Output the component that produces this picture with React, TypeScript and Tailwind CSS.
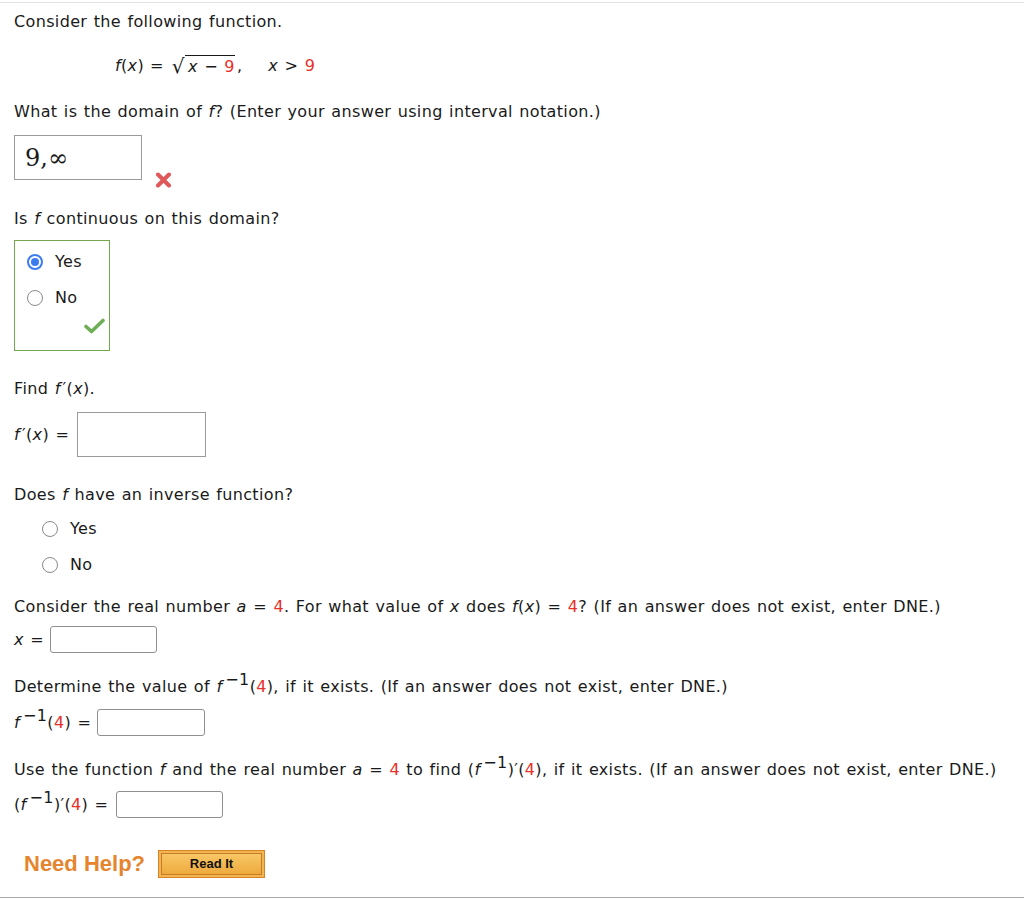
import React from 'react'

const red = 'text-[#e8302a]'

function I({ children }: { children: React.ReactNode }) {
  return <span className="italic">{children}</span>
}

function R({ children }: { children: React.ReactNode }) {
  return <span className={red}>{children}</span>
}

function Inv() {
  return (
    <>
      <I>f</I>
      <span className="relative -top-[7px] ml-[3px] text-[16px] leading-none">−1</span>
    </>
  )
}

function Radio({ checked, label }: { checked?: boolean; label: string }) {
  return (
    <div className="flex h-5 items-center">
      {checked ? (
        <span className="flex h-4 w-4 items-center justify-center rounded-full border-[2px] border-[#3b7cf0] bg-white">
          <span className="h-[8px] w-[8px] rounded-full bg-[#3b7cf0]" />
        </span>
      ) : (
        <span className="h-4 w-4 rounded-full border border-[#8a8a8a] bg-white" />
      )}
      <span className="ml-3">{label}</span>
    </div>
  )
}

function SmallBox({ width }: { width: string }) {
  return <div className={`h-[27px] rounded-[3px] border border-[#8f8f8f] bg-white ${width}`} />
}

export default function App() {
  return (
    <div className="flex h-[899px] w-[1024px] flex-col bg-white text-[16px] leading-5 tracking-[0.35px] text-[#1a1a1a] [font-family:'DejaVu_Sans',Verdana,sans-serif] [word-spacing:1px]">
      <div className="mt-[2px] h-px bg-[#e3e3e3]" />
      <div className="pl-[14px]">
        <p className="mt-[9px]">Consider the following function.</p>

        <div className="ml-[101px] mt-[23px] flex items-center">
          <I>f</I>(<I>x</I>) <span className="ml-[6px]">=</span>
          <span className="ml-[8px] text-[20px] leading-5">√</span>
          <span className="border-t border-[#1a1a1a] pl-[3px] pt-[1px]">
            <I>x</I> − <R>9</R>
          </span>
          <span className="ml-[2px]">,</span>
          <span className="ml-[26px]">
            <I>x</I> &gt; <R>9</R>
          </span>
        </div>

        <p className="mt-[25px]">
          What is the domain of <I>f</I>? (Enter your answer using interval notation.)
        </p>

        <div className="mt-[13px] flex items-start">
          <div className="flex h-[45px] w-[128px] items-center border border-[#9a9a9a] pl-[10px] text-[24px] tracking-normal [font-family:'DejaVu_Serif','Liberation_Serif',serif]">
            9,∞
          </div>
          <svg className="ml-[13px] mt-[37px]" width="17" height="16" viewBox="0 0 17 16">
            <path d="M3 2.5 L14 13.5 M14 2.5 L3 13.5" stroke="#e0585a" strokeWidth="4" strokeLinecap="round" />
          </svg>
        </div>

        <p className="mt-[21px]">
          Is <I>f</I> continuous on this domain?
        </p>

        <div className="mt-[11px] flex h-[111px] w-[96px] flex-col border-[1.5px] border-[#74a84c] pl-[12px]">
          <div className="mt-[11px]">
            <Radio checked label="Yes" />
          </div>
          <div className="mt-[16px]">
            <Radio label="No" />
          </div>
          <svg className="ml-[57px] mt-[10px]" width="21" height="16" viewBox="0 0 21 16">
            <path d="M2 8.5 L7.5 13.5 L19 2.5" fill="none" stroke="#6fae55" strokeWidth="3.6" strokeLinecap="round" strokeLinejoin="round" />
          </svg>
        </div>

        <p className="mt-[28px]">
          Find <I>f</I>
          <span className="ml-[2px]">′</span>(<I>x</I>).
        </p>

        <div className="mt-[13px] flex items-center">
          <span>
            <I>f</I>
            <span className="ml-[2px]">′</span>(<I>x</I>) =
          </span>
          <div className="ml-[8px] h-[45px] w-[129px] border border-[#9a9a9a] bg-white" />
        </div>

        <p className="mt-[28px]">
          Does <I>f</I> have an inverse function?
        </p>

        <div className="ml-[28px] mt-[14px]">
          <Radio label="Yes" />
        </div>
        <div className="ml-[28px] mt-[16px]">
          <Radio label="No" />
        </div>

        <p className="mt-[22px]">
          Consider the real number <I>a</I> = <R>4</R>. For what value of <I>x</I> does <I>f</I>(<I>x</I>) = <R>4</R>? (If an
          answer does not exist, enter DNE.)
        </p>

        <div className="mt-[9px] flex items-center">
          <span>
            <I>x</I> =
          </span>
          <div className="ml-[6px]">
            <SmallBox width="w-[107px]" />
          </div>
        </div>

        <p className="mt-[24px]">
          Determine the value of <Inv />(<R>4</R>), if it exists. (If an answer does not exist, enter DNE.)
        </p>

        <div className="mt-[12px] flex items-center">
          <span>
            <Inv />(<R>4</R>) =
          </span>
          <div className="ml-[6px]">
            <SmallBox width="w-[108px]" />
          </div>
        </div>

        <p className="mt-[24px]">
          Use the function <I>f</I> and the real number <I>a</I> = <R>4</R> to find (<Inv />)′(<R>4</R>), if it exists. (If an
          answer does not exist, enter DNE.)
        </p>

        <div className="mt-[11px] flex items-center">
          <span>
            (<Inv />)′(<R>4</R>) =
          </span>
          <div className="ml-[8px]">
            <SmallBox width="w-[107px]" />
          </div>
        </div>

        <div className="mt-[32px] flex items-center pl-[10px] tracking-normal [font-family:'Liberation_Sans',Arial,sans-serif] [word-spacing:0px]">
          <span className="text-[22px] font-bold text-[#e5852f]">Need Help?</span>
          <button className="ml-[13px] flex h-[28px] w-[107px] items-center justify-center border border-[#d9822b] bg-[#f1b64c] p-[2px]">
            <span className="flex h-full w-full items-center justify-center border border-[#c97a2c] bg-gradient-to-b from-[#f7c765] to-[#eeaa3c] text-[13px] font-bold text-[#111]">
              Read It
            </span>
          </button>
        </div>
      </div>
      <div className="flex-1" />
      <div className="mb-px h-[1.5px] bg-[#a9a9a9]" />
    </div>
  )
}
